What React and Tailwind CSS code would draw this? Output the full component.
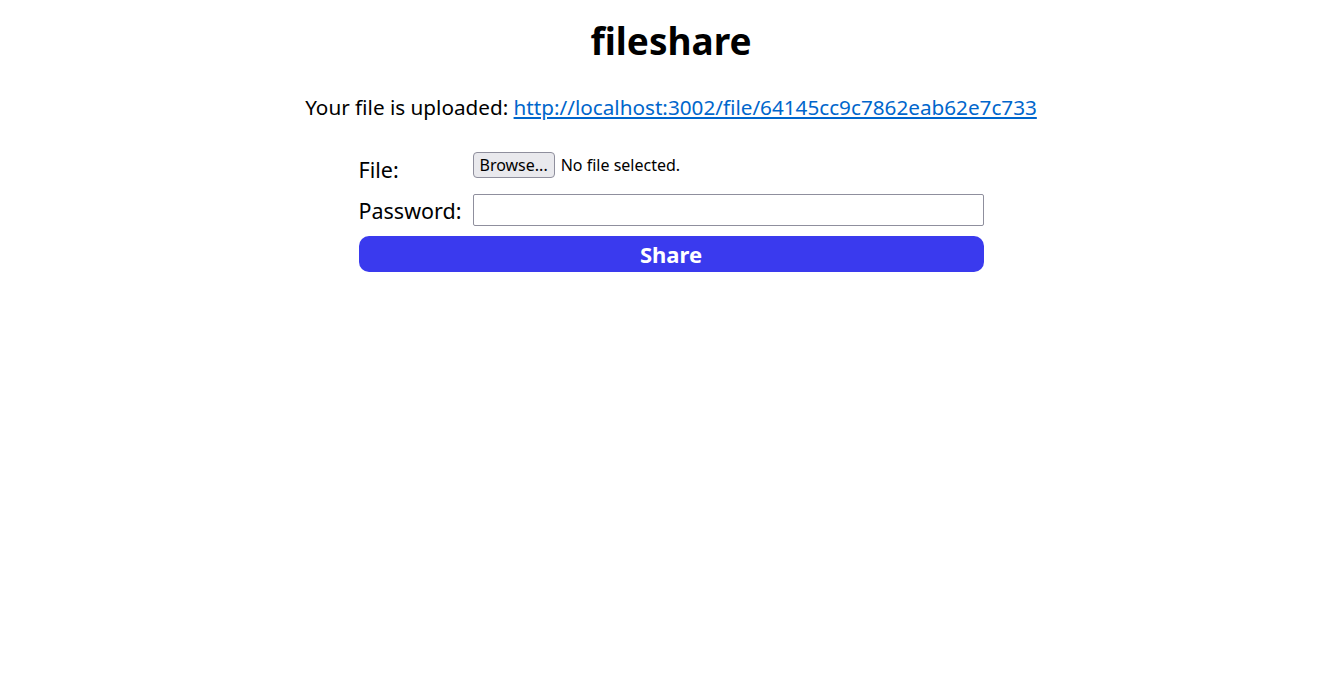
export default function App() {
  return (
    <div className="min-h-screen bg-white pl-5 text-black" style={{ fontFamily: '"Noto Sans", "Open Sans", sans-serif' }}>
      <div className="flex flex-col items-center">
        <h1 className="mt-[14px] text-[37px] font-bold leading-[54px]">fileshare</h1>
        <p className="mt-[25px] text-[20.7px] leading-[28px]">
          Your file is uploaded:{' '}
          <a href="#" className="text-[#0066cc] underline">
            http://localhost:3002/file/64145cc9c7862eab62e7c733
          </a>
        </p>

        <form className="mt-[31px] w-[625px]" onSubmit={e => e.preventDefault()}>
          <div className="flex h-[32px] items-start">
            <label className="w-[114px] shrink-0 pt-[4px] text-[21.5px] leading-[28px]">File:</label>
            <div className="flex items-center gap-[6px]">
              <button
                type="button"
                className="h-[26px] rounded-[4px] border border-[#8f8f9d] bg-[#e9e9ed] px-[6px] text-[16px] leading-[20px]"
              >
                Browse...
              </button>
              <span className="text-[16px]">No file selected.</span>
            </div>
          </div>

          <div className="mt-[10px] flex items-center">
            <label className="w-[114px] shrink-0 pt-[1px] text-[21.5px] leading-[28px]">Password:</label>
            <input
              type="password"
              className="h-[32px] flex-1 rounded-[2px] border border-[#8f8f9d] px-2 text-[16px] outline-none"
            />
          </div>

          <button
            type="submit"
            className="mt-[10px] h-[36px] w-full rounded-[10px] bg-[#3a3aee] text-[22px] font-bold leading-[36px] text-white"
          >
            Share
          </button>
        </form>
      </div>
    </div>
  );
}
